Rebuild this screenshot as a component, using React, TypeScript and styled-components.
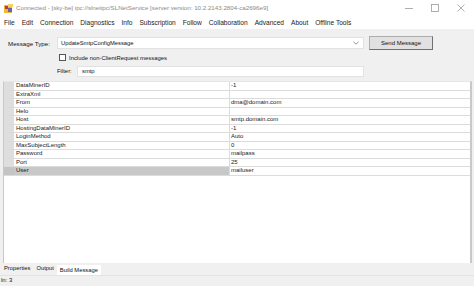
import React, { FC } from "react";
import styled, { createGlobalStyle } from "styled-components";

const GlobalStyle = createGlobalStyle`
    html, body {
        margin: 0;
        padding: 0;
        background: #ffffff;
    }
    body {
        font-family: "Liberation Sans", Arial, sans-serif;
    }
`

interface Prop {
    name: string;
    value: string;
}

const props: Prop[] = [
    { name: "DataMinerID", value: "-1" },
    { name: "ExtraXml", value: "" },
    { name: "From", value: "dma@domain.com" },
    { name: "Helo", value: "" },
    { name: "Host", value: "smtp.domain.com" },
    { name: "HostingDataMinerID", value: "-1" },
    { name: "LoginMethod", value: "Auto" },
    { name: "MaxSubjectLength", value: "0" },
    { name: "Password", value: "mailpass" },
    { name: "Port", value: "25" },
    { name: "User", value: "mailuser" },
];

const menus = ["File", "Edit", "Connection", "Diagnostics", "Info", "Subscription", "Follow", "Collaboration", "Advanced", "About", "Offline Tools"];

const App: FC = () => {
    return (
        <Window>
            <GlobalStyle />
            <TitleBar>
                <AppIcon width="9" height="9" viewBox="0 0 9 9">
                    <rect x="0" y="1" width="8" height="8" fill="#e8b93c" />
                    <rect x="1" y="2" width="3" height="3" fill="#c0392b" />
                    <rect x="4" y="4" width="4" height="4" fill="#7d5aa8" />
                    <rect x="4" y="0" width="5" height="3" fill="#f4d35e" />
                </AppIcon>
                <Title>Connected - [sky-be] ipc://slnetipc/SLNetService [server version: 10.2.2143.2804-ca2696e9]</Title>
                <Controls>
                    <Control>
                        <svg width="8" height="8" viewBox="0 0 8 8"><path d="M0 4.5H8" stroke="#999" strokeWidth="0.8" /></svg>
                    </Control>
                    <Control>
                        <svg width="8" height="8" viewBox="0 0 8 8"><rect x="0.5" y="0.5" width="7" height="7" fill="none" stroke="#999" strokeWidth="0.8" /></svg>
                    </Control>
                    <Control>
                        <svg width="8" height="8" viewBox="0 0 8 8"><path d="M0.5 0.5L7.5 7.5M7.5 0.5L0.5 7.5" stroke="#999" strokeWidth="0.8" /></svg>
                    </Control>
                </Controls>
            </TitleBar>
            <MenuBar>
                {menus.map(m => <MenuItem key={m}>{m}</MenuItem>)}
            </MenuBar>
            <Body>
                <FormRow>
                    <FieldLabel>Message Type:</FieldLabel>
                    <Combo>
                        <span>UpdateSmtpConfigMessage</span>
                        <svg width="6" height="4" viewBox="0 0 6 4"><path d="M0.5 0.8L3 3.2L5.5 0.8" fill="none" stroke="#777" strokeWidth="0.8" /></svg>
                    </Combo>
                    <SendButton>Send Message</SendButton>
                </FormRow>
                <CheckRow>
                    <CheckBox />
                    <CheckLabel>Include non-ClientRequest messages</CheckLabel>
                </CheckRow>
                <FilterRow>
                    <FilterLabel>Filter:</FilterLabel>
                    <TextInput>smtp</TextInput>
                </FilterRow>
                <GridPanel>
                    {props.map((p, i) => {
                        const selected = i === props.length - 1;
                        return (
                            <GridRow key={p.name}>
                                <RowHeader selected={selected} />
                                <NameCell selected={selected}>{p.name}</NameCell>
                                <ValueCell>{p.value}</ValueCell>
                            </GridRow>
                        );
                    })}
                </GridPanel>
                <TabStrip>
                    <Tab>Properties</Tab>
                    <Tab>Output</Tab>
                    <Tab active>Build Message</Tab>
                </TabStrip>
            </Body>
            <StatusBar>ln: 3</StatusBar>
        </Window>
    );
}

export default App;

const Window = styled.div`
    width: 474px;
    height: 286px;
    display: flex;
    flex-direction: column;
    overflow: hidden;
    background: #ffffff;
    color: #000;
`

const TitleBar = styled.div`
    height: 15px;
    display: flex;
    align-items: center;
    padding-left: 4px;
    flex-shrink: 0;
`

const AppIcon = styled.svg`
    margin-right: 3px;
    margin-top: 1px;
`

const Title = styled.span`
    font-size: 6.2px;
    color: #8a8a8a;
    white-space: nowrap;
    flex: 1;
`

const Controls = styled.div`
    display: flex;
    align-items: center;
    padding-right: 0;
`

const Control = styled.div`
    width: 26px;
    display: flex;
    justify-content: center;
    svg {
        display: block;
    }
`

const MenuBar = styled.div`
    height: 14px;
    display: flex;
    align-items: center;
    padding-left: 4px;
    gap: 7px;
    flex-shrink: 0;
`

const MenuItem = styled.span`
    font-size: 6.6px;
    color: #222;
    white-space: nowrap;
`

const Body = styled.div`
    flex: 1;
    display: flex;
    flex-direction: column;
    background: #f0f0f0;
    padding-top: 7px;
    min-height: 0;
`

const FormRow = styled.div`
    display: flex;
    align-items: center;
    padding-left: 8px;
    height: 14px;
`

const FieldLabel = styled.span`
    width: 49px;
    font-size: 6.2px;
    color: #111;
    white-space: nowrap;
`

const Combo = styled.div`
    width: 307px;
    height: 12px;
    box-sizing: border-box;
    background: #fff;
    border: 1px solid #e2e2e2;
    display: flex;
    align-items: center;
    justify-content: space-between;
    padding: 0 4px 0 3px;
    font-size: 5.8px;
    color: #111;
`

const SendButton = styled.div`
    margin-left: 5px;
    width: 64px;
    height: 14px;
    box-sizing: border-box;
    background: #e1e1e1;
    border: 1px solid #adadad;
    border-right-color: #707070;
    border-bottom-color: #707070;
    display: flex;
    align-items: center;
    justify-content: center;
    font-size: 6px;
    color: #111;
`

const CheckRow = styled.div`
    display: flex;
    align-items: center;
    padding-left: 59px;
    height: 9px;
    margin-top: 3px;
`

const CheckBox = styled.div`
    width: 7px;
    height: 7px;
    border: 1px solid #555;
    background: #fff;
    margin-right: 3px;
    box-sizing: border-box;
`

const CheckLabel = styled.span`
    font-size: 5.9px;
    color: #111;
    white-space: nowrap;
`

const FilterRow = styled.div`
    display: flex;
    align-items: center;
    padding-left: 57px;
    height: 12px;
    margin-top: 3px;
`

const FilterLabel = styled.span`
    width: 20px;
    font-size: 5.9px;
    color: #111;
`

const TextInput = styled.div`
    width: 287px;
    height: 11px;
    box-sizing: border-box;
    background: #fff;
    border: 1px solid #e2e2e2;
    font-size: 5.8px;
    color: #111;
    display: flex;
    align-items: center;
    padding-left: 4px;
`

const GridPanel = styled.div`
    flex: 1;
    margin: 4px 2px 0 3px;
    background: #fff;
    border-left: 1px solid #c8c8c8;
    border-right: 2px solid #c8c8c8;
    border-top: 1px solid #e6e6e6;
    min-height: 0;
`

const GridRow = styled.div`
    display: flex;
    height: 8.5px;
    box-sizing: border-box;
    border-bottom: 1px solid #dcdcdc;
    font-size: 6px;
    color: #222;
`

interface SelectedProps {
    selected?: boolean;
}

const RowHeader = styled.div<SelectedProps>`
    width: 10px;
    background: ${p => p.selected ? "#c4c4c4" : "#dedede"};
    flex-shrink: 0;
`

const NameCell = styled.div<SelectedProps>`
    width: 213px;
    padding-left: 2px;
    line-height: 7.5px;
    white-space: nowrap;
    border-right: 1px solid #dcdcdc;
    background: ${p => p.selected ? "#c8c8c8" : "#fff"};
    flex-shrink: 0;
`

const ValueCell = styled.div`
    flex: 1;
    padding-left: 1px;
    line-height: 7.5px;
    white-space: nowrap;
`

const TabStrip = styled.div`
    height: 12px;
    display: flex;
    align-items: flex-end;
    padding-left: 1px;
    background: #f0f0f0;
    flex-shrink: 0;
`

interface TabProps {
    active?: boolean;
}

const Tab = styled.div<TabProps>`
    font-size: 5.8px;
    color: #111;
    padding: 0 3px;
    height: ${p => p.active ? "10px" : "11px"};
    line-height: ${p => p.active ? "11px" : "9px"};
    background: ${p => p.active ? "#ffffff" : "#f0f0f0"};
    white-space: nowrap;
`

const StatusBar = styled.div`
    height: 10px;
    background: #f0f0f0;
    border-top: 1px solid #e4e4e4;
    font-size: 6px;
    color: #111;
    padding-left: 1px;
    line-height: 9px;
    flex-shrink: 0;
`
